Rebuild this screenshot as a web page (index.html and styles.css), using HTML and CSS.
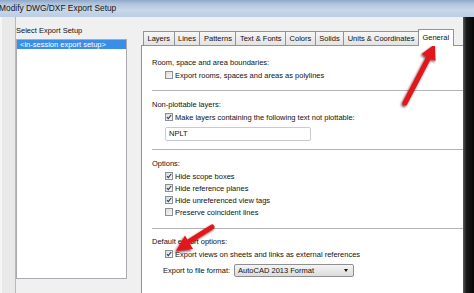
FILE: index.html
```html
<!DOCTYPE html>
<html lang="en">
<head>
    <meta charset="UTF-8">
    <meta name="viewport" content="width=device-width, initial-scale=1.0">
    <title>Modify DWG/DXF Export Setup</title>
    <link rel="stylesheet" href="styles.css">
</head>
<body>
    <div class="window">
        <div class="titlebar">Modify DWG/DXF Export Setup</div>

        <div class="dialog">
            <div class="frame-edge"></div>

            <div class="setups">
                <div class="setups-label">Select Export Setup</div>
                <ul class="setup-list">
                    <li class="selected">&lt;in-session export setup&gt;</li>
                </ul>
            </div>

            <div class="tabs-area">
                <div class="tab-strip">
                    <span class="tab">Layers</span>
                    <span class="tab">Lines</span>
                    <span class="tab">Patterns</span>
                    <span class="tab">Text &amp; Fonts</span>
                    <span class="tab">Colors</span>
                    <span class="tab">Solids</span>
                    <span class="tab">Units &amp; Coordinates</span>
                    <span class="tab active">General</span>
                </div>

                <div class="tab-panel">
                    <div class="group group-rooms">
                        <div class="group-title">Room, space and area boundaries:</div>
                        <div class="check"><span class="box"></span>Export rooms, spaces and areas as polylines</div>
                    </div>

                    <div class="group group-layers">
                        <div class="group-title">Non-plottable layers:</div>
                        <div class="check"><span class="box checked"></span>Make layers containing the following text not plottable:</div>
                        <div class="text-input">NPLT</div>
                    </div>

                    <div class="group group-options">
                        <div class="group-title">Options:</div>
                        <div class="check"><span class="box checked"></span>Hide scope boxes</div>
                        <div class="check"><span class="box checked"></span>Hide reference planes</div>
                        <div class="check"><span class="box checked"></span>Hide unreferenced view tags</div>
                        <div class="check"><span class="box"></span>Preserve coincident lines</div>
                    </div>

                    <div class="group group-default">
                        <div class="group-title">Default export options:</div>
                        <div class="check"><span class="box checked"></span>Export views on sheets and links as external references</div>
                        <div class="format-row">
                            <span>Export to file format:</span>
                            <div class="select">AutoCAD 2013 Format<span class="caret"></span></div>
                        </div>
                    </div>
                </div>
            </div>

            <div class="shade"></div>
        </div>

        <!-- red callout arrows drawn over the dialog -->
        <svg class="arrows" width="474" height="293" viewBox="0 0 474 293">
            <defs>
                <filter id="shadow" x="-20%" y="-20%" width="140%" height="140%">
                    <feDropShadow dx="-1.2" dy="1.5" stdDeviation="0.8" flood-color="#400000" flood-opacity="0.75"/>
                </filter>
            </defs>
            <g filter="url(#shadow)">
                <line x1="405" y1="103" x2="429" y2="57" stroke="#e3181b" stroke-width="5" stroke-linecap="round"/>
                <polygon points="435,44 435.5,61 421.5,54" fill="#e3181b"/>
                <line x1="212" y1="227" x2="188" y2="242" stroke="#e3181b" stroke-width="5" stroke-linecap="round"/>
                <polygon points="176,251 193,249 185,235.5" fill="#e3181b"/>
            </g>
        </svg>
    </div>
</body>
</html>
```

FILE: styles.css
```css
* {
    margin: 0;
    padding: 0;
    box-sizing: border-box;
}

body {
    font-family: 'Liberation Sans', Arial, sans-serif;
    font-size: 7.5px;
    color: #111;
    background-color: #f0f0f0;
    width: 474px;
    height: 293px;
    overflow: hidden;
}

.window {
    position: relative;
    width: 474px;
    height: 293px;
}

.titlebar {
    height: 17px;
    line-height: 17px;
    font-size: 8.4px;
    color: #161616;
    margin-left: -1px;
    background: linear-gradient(#8ea8c8 0%, #b3c6de 25%, #c8d7ea 60%, #bccde2 100%);
}

.dialog {
    display: flex;
    height: 276px;
}

.frame-edge {
    width: 16px;
    background-color: #e9e9e9;
    border-left: 2px solid #f6f6f6;
    border-right: 1px solid #b9b9b9;
}

.setups {
    width: 125px;
    padding-top: 8px;
}

.setups-label {
    line-height: 12px;
    margin-bottom: 2px;
}

.setup-list {
    list-style: none;
    width: 111px;
    height: 240px;
    background-color: #fff;
    border: 1px solid #a9abb0;
}

.setup-list li {
    height: 9px;
    line-height: 9px;
    padding-left: 3px;
    white-space: nowrap;
}

.setup-list .selected {
    background-color: #3b8ee8;
    color: #fff;
}

.tabs-area {
    width: 322px;
    display: flex;
    flex-direction: column;
}

.tab-strip {
    height: 28px;
    display: flex;
    align-items: flex-end;
    padding-left: 2px;
    position: relative;
    z-index: 1;
}

.tab {
    height: 14px;
    line-height: 13px;
    padding: 0 3.5px;
    border: 1px solid #8f939b;
    border-bottom: none;
    margin-right: -1px;
    white-space: nowrap;
    background: linear-gradient(#f6f6f6, #e3e3e3);
}

.tab.active {
    height: 17px;
    line-height: 15px;
    margin-bottom: -1px;
    background: #fff;
}

.tab-panel {
    flex: 1;
    background-color: #fff;
    border-top: 1px solid #8f939b;
    border-left: 1px solid #8f939b;
}

.group {
    margin-left: 10px;
    border-bottom: 1px solid #b4b4b4;
}

.group-rooms {
    padding-top: 11px;
    padding-bottom: 9px;
}

.group-layers {
    padding-top: 8px;
    padding-bottom: 8px;
}

.group-options {
    padding-top: 8px;
    padding-bottom: 10px;
}

.group-default {
    padding-top: 7px;
    border-bottom: none;
}

.group-title {
    line-height: 12px;
}

.check {
    display: flex;
    align-items: center;
    height: 12px;
    padding-left: 13px;
    white-space: nowrap;
}

.box {
    width: 8px;
    height: 8px;
    margin-right: 2px;
    border: 1px solid #8e8f8f;
    background: linear-gradient(135deg, #dcdcdc, #f8f8f8);
}

.box.checked {
    background: url("data:image/svg+xml,%3Csvg xmlns='http://www.w3.org/2000/svg' viewBox='0 0 6 6'%3E%3Cpath d='M0.9 3.1 L2.3 4.7 L5.2 1' fill='none' stroke='%2321406e' stroke-width='1.1'/%3E%3C/svg%3E") center / 6px 6px no-repeat, linear-gradient(135deg, #dcdcdc, #f8f8f8);
}

.text-input {
    width: 146px;
    height: 14px;
    line-height: 12px;
    margin: 4px 0 0 13px;
    padding-left: 3px;
    border: 1px solid #c8cacd;
    border-radius: 2px;
}

.format-row {
    display: flex;
    align-items: center;
    gap: 4px;
    margin-top: 4px;
    padding-left: 11px;
    white-space: nowrap;
}

.select {
    position: relative;
    width: 120px;
    height: 13px;
    line-height: 11px;
    padding-left: 3px;
    border: 1px solid #8e8f8f;
    border-radius: 2px;
    background: linear-gradient(#f4f4f4, #dcdcdc);
}

.caret {
    position: absolute;
    right: 5px;
    top: 4px;
    border-left: 2.5px solid transparent;
    border-right: 2.5px solid transparent;
    border-top: 3px solid #111;
}

.shade {
    width: 11px;
    background: linear-gradient(to right, #5a5a5a, #1a1a1a 30%, #050505);
}

.arrows {
    position: absolute;
    left: 0;
    top: 0;
    pointer-events: none;
}
```
